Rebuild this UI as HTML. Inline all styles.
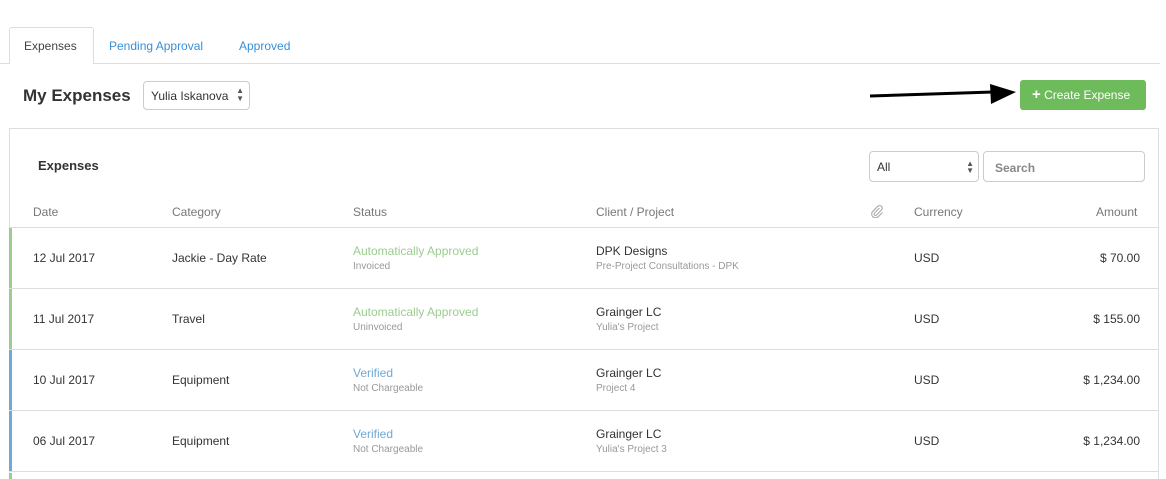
<!DOCTYPE html>
<html><head><style>
*{box-sizing:border-box;margin:0;padding:0}
html,body{width:1166px;height:479px;overflow:hidden;background:#fff;font-family:"Liberation Sans",sans-serif;color:#333;position:relative}
.a{position:absolute;white-space:nowrap}
.tab{font-size:12px;color:#3a8fd6}
.th{font-size:12px;color:#777;top:205px}
.row{position:absolute;left:9px;width:1150px;height:61px;border-bottom:1px solid #ddd}
.bar{position:absolute;left:0;top:0;width:3px;height:100%}
.c{position:absolute;font-size:12px;color:#333;white-space:nowrap}
.s{position:absolute;font-size:10px;color:#999;white-space:nowrap}
</style></head><body>
<div class="a" style="left:0;top:63px;width:1160px;border-top:1px solid #ddd"></div>
<div class="a" style="left:9px;top:27px;width:85px;height:37px;border:1px solid #ddd;border-bottom:none;background:#fff;border-radius:3px 3px 0 0"></div>
<div class="a tab" style="left:24px;top:39px;color:#444">Expenses</div>
<div class="a tab" style="left:109px;top:39px">Pending Approval</div>
<div class="a tab" style="left:239px;top:39px">Approved</div>
<div class="a" style="left:23px;top:86px;font-size:17px;font-weight:bold;color:#333">My Expenses</div>
<div class="a" style="left:143px;top:81px;width:107px;height:29px;border:1px solid #ccc;border-radius:4px;font-size:12px;padding:7px 0 0 7px">Yulia Iskanova<span style="position:absolute;right:5px;top:5px;font-size:8px;line-height:8px;color:#555">▲<br>▼</span></div>
<svg class="a" style="left:868px;top:84px" width="150" height="20"><path d="M2 12 L125 8" stroke="#000" stroke-width="3"/><path d="M122 0 L148 8 L123 20 Z" fill="#000"/></svg>
<div class="a" style="left:1020px;top:80px;width:126px;height:30px;background:#6dbb5b;border-radius:3px;color:#fff;font-size:12px;padding:8px 0 0 12px"><b style="font-size:15px;line-height:12px">+</b> Create Expense</div>
<div class="a" style="left:9px;top:128px;width:1150px;height:352px;border:1px solid #ddd;border-bottom:none"></div>
<div class="a" style="left:38px;top:158px;font-size:13px;font-weight:bold">Expenses</div>
<div class="a" style="left:869px;top:151px;width:110px;height:31px;border:1px solid #ccc;border-radius:4px;font-size:12px;padding:8px 0 0 7px">All<span style="position:absolute;right:4px;top:8px;font-size:8px;line-height:7px;color:#555">▲<br>▼</span></div>
<div class="a" style="left:983px;top:151px;width:162px;height:31px;border:1px solid #ccc;border-radius:4px;font-size:12px;color:#888;padding:9px 0 0 11px;font-weight:bold">Search</div>
<div class="a th" style="left:33px">Date</div>
<div class="a th" style="left:172px">Category</div>
<div class="a th" style="left:353px">Status</div>
<div class="a th" style="left:596px">Client / Project</div>
<svg class="a" style="left:870px;top:204px" width="14" height="14" viewBox="0 0 14 14"><path d="M9.5 4 L4.5 9 a1.4 1.4 0 0 0 2 2 L11.5 6 a2.6 2.6 0 0 0 -3.7 -3.7 L2.8 7.3 a3.8 3.8 0 0 0 5.4 5.4 L12.5 8.5" fill="none" stroke="#aaa" stroke-width="1.1"/></svg>
<div class="a th" style="left:914px">Currency</div>
<div class="a th" style="left:1096px">Amount</div>
<div class="a" style="left:9px;top:227px;width:1150px;border-top:1px solid #ddd"></div>

<div class="row" style="top:228px"><div class="bar" style="background:#9ccc8f"></div>
<div class="c" style="left:24px;top:23px">12 Jul 2017</div><div class="c" style="left:163px;top:23px">Jackie - Day Rate</div>
<div class="c" style="left:344px;top:16px;color:#9ccc8f">Automatically Approved</div><div class="s" style="left:344px;top:33px">Invoiced</div>
<div class="c" style="left:587px;top:16px">DPK Designs</div><div class="s" style="left:587px;top:33px">Pre-Project Consultations - DPK</div>
<div class="c" style="left:905px;top:23px">USD</div><div class="c" style="right:19px;top:23px">$ 70.00</div></div>

<div class="row" style="top:289px"><div class="bar" style="background:#9ccc8f"></div>
<div class="c" style="left:24px;top:23px">11 Jul 2017</div><div class="c" style="left:163px;top:23px">Travel</div>
<div class="c" style="left:344px;top:16px;color:#9ccc8f">Automatically Approved</div><div class="s" style="left:344px;top:33px">Uninvoiced</div>
<div class="c" style="left:587px;top:16px">Grainger LC</div><div class="s" style="left:587px;top:33px">Yulia's Project</div>
<div class="c" style="left:905px;top:23px">USD</div><div class="c" style="right:19px;top:23px">$ 155.00</div></div>

<div class="row" style="top:350px"><div class="bar" style="background:#6ea9d8"></div>
<div class="c" style="left:24px;top:23px">10 Jul 2017</div><div class="c" style="left:163px;top:23px">Equipment</div>
<div class="c" style="left:344px;top:16px;color:#6ea9d8">Verified</div><div class="s" style="left:344px;top:33px">Not Chargeable</div>
<div class="c" style="left:587px;top:16px">Grainger LC</div><div class="s" style="left:587px;top:33px">Project 4</div>
<div class="c" style="left:905px;top:23px">USD</div><div class="c" style="right:19px;top:23px">$ 1,234.00</div></div>

<div class="row" style="top:411px"><div class="bar" style="background:#6ea9d8"></div>
<div class="c" style="left:24px;top:23px">06 Jul 2017</div><div class="c" style="left:163px;top:23px">Equipment</div>
<div class="c" style="left:344px;top:16px;color:#6ea9d8">Verified</div><div class="s" style="left:344px;top:33px">Not Chargeable</div>
<div class="c" style="left:587px;top:16px">Grainger LC</div><div class="s" style="left:587px;top:33px">Yulia's Project 3</div>
<div class="c" style="left:905px;top:23px">USD</div><div class="c" style="right:19px;top:23px">$ 1,234.00</div></div>

<div class="a" style="left:9px;top:473px;width:3px;height:8px;background:#9ccc8f"></div>
</body></html>
